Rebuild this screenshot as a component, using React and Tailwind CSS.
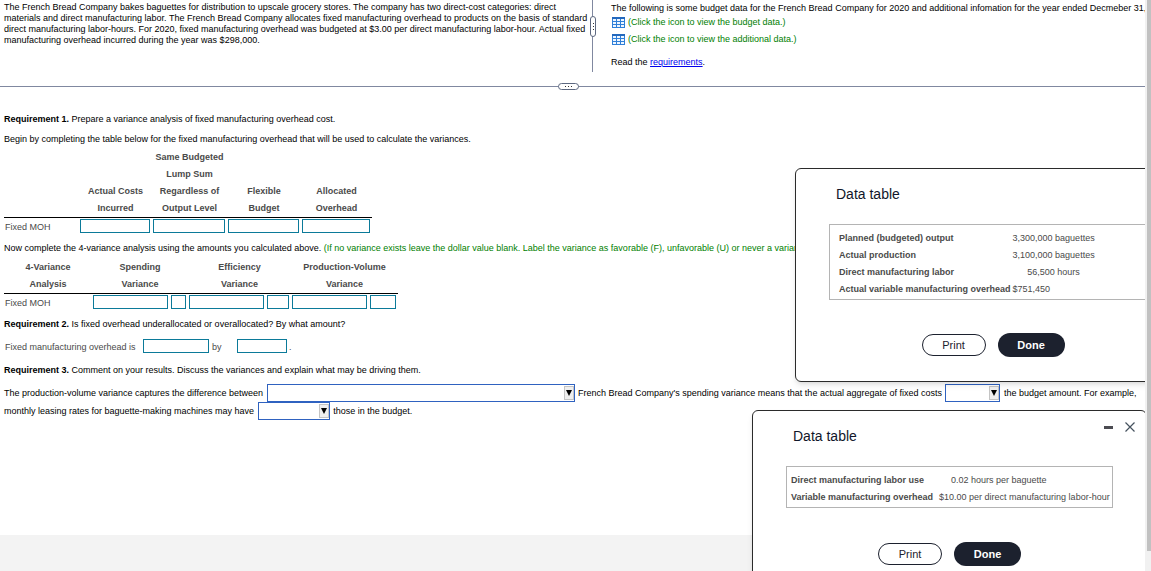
import { useState } from "react";

const budgetHeads = [
  ["Actual Costs", "Incurred"],
  ["Same Budgeted", "Lump Sum", "Regardless of", "Output Level"],
  ["Flexible", "Budget"],
  ["Allocated", "Overhead"],
];

const varianceHeads = ["Spending", "Efficiency", "Production-Volume"];

const GridIcon = () => (
  <svg width="13" height="11" viewBox="0 0 13 11" shapeRendering="crispEdges" aria-hidden="true">
    <rect width="13" height="11" rx="1" fill="#2f7fd8" />
    <rect width="13" height="2" fill="#2368bd" />
    <g fill="#eef6ff">
      {[2, 5, 8].map((y) =>
        [1, 5, 9].map((x) => <rect key={`${x}-${y}`} x={x} y={y} width="3" height="2" />)
      )}
    </g>
  </svg>
);

const AnswerBox = ({ label, className = "w-full" }) => (
  <input
    type="text"
    aria-label={label}
    className={`block h-[14px] border border-[#0b7a99] bg-white px-1 focus:outline-none ${className}`}
  />
);

const AnswerSelect = ({ label, options, className }) => {
  const [value, setValue] = useState("");

  return (
    <span className={`relative mx-px inline-block h-[18px] align-top ${className}`}>
      <select
        aria-label={label}
        value={value}
        onChange={(event) => setValue(event.target.value)}
        className="block h-full w-full appearance-none border border-[#2f62c0] bg-white pl-1 pr-3 focus:outline-none"
      >
        <option value=""></option>
        {options.map((option) => (
          <option key={option} value={option}>
            {option}
          </option>
        ))}
      </select>
      <span className="pointer-events-none absolute top-[2px] right-[1px] flex h-[14px] w-[10px] justify-center border border-[#c4c4c4] bg-[#efefef] pt-[3px]">
        <svg width="6" height="6" viewBox="0 0 6 6" aria-hidden="true">
          <path d="M0 0h6L3 6z" fill="#000" />
        </svg>
      </span>
    </span>
  );
};

const DataDialog = ({ className, controls, children }) => (
  <section
    role="dialog"
    aria-label="Data table"
    className={`absolute rounded-md border border-[#2b2b2b] bg-white pb-6 shadow-md ${className}`}
  >
    {controls && (
      <div className="absolute top-[10px] right-[11px] flex items-center gap-3 text-[#46525e]">
        <button type="button" aria-label="Minimize" className="flex h-3 items-center">
          <span className="h-[3px] w-[9px] bg-[#4c4c52]" />
        </button>
        <button type="button" aria-label="Close">
          <svg width="10" height="10" viewBox="0 0 10 10" fill="none" stroke="currentColor" strokeWidth="1.2">
            <path d="M0.5 0.5l9 9M9.5 0.5l-9 9" />
          </svg>
        </button>
      </div>
    )}
    <h2 className="pt-[17px] pl-10 text-[14px] leading-4 text-[#11162a]">Data table</h2>
    {children}
    <div className="flex items-center justify-center gap-3 text-[11px]">
      <button type="button" className="h-[22px] w-16 rounded-full border border-[#1c212e] text-[#1c212e]">
        Print
      </button>
      <button type="button" className="h-6 w-[67px] rounded-full bg-[#1c212e] font-bold text-white">
        Done
      </button>
    </div>
  </section>
);

const App = () => {
  return (
    <div className="flex h-screen overflow-hidden bg-white font-['Liberation_Sans',Arial,sans-serif] text-[9px] leading-4 text-black">
      <main className="relative flex min-w-0 flex-1 flex-col overflow-hidden">
        <header className="flex h-[86px] shrink-0">
          <p className="w-[592px] shrink-0 pt-[2px] pr-1 pl-1 leading-[11px]">
            The French Bread Company bakes baguettes for distribution to upscale grocery stores. The company has two
            direct-cost categories: direct materials and direct manufacturing labor. The French Bread Company allocates
            fixed manufacturing overhead to products on the basis of standard direct manufacturing labor-hours. For
            2020, fixed manufacturing overhead was budgeted at $3.00 per direct manufacturing labor-hour. Actual fixed
            manufacturing overhead incurred during the year was $298,000.
          </p>
          <div className="relative h-[72px] w-px shrink-0 bg-[#8088a0]">
            <span className="absolute top-4 -left-[2px] flex h-[21px] w-[6px] flex-col items-center justify-center gap-[2px] rounded-full border border-[#5d6880] bg-white">
              <i className="size-px bg-[#333]" />
              <i className="size-px bg-[#333]" />
              <i className="size-px bg-[#333]" />
            </span>
          </div>
          <div className="flex min-w-0 flex-1 flex-col pl-[18px] whitespace-nowrap">
            <p>
              The following is some budget data for the French Bread Company for 2020 and additional infomation for the
              year ended Decmeber 31, 2020.
            </p>
            <button type="button" className="mt-[-2px] flex items-center gap-[3px] pl-px text-[#008000]">
              <GridIcon />
              (Click the icon to view the budget data.)
            </button>
            <button type="button" className="mt-px flex items-center gap-[3px] pl-px text-[#008000]">
              <GridIcon />
              (Click the icon to view the additional data.)
            </button>
            <p className="mt-[7px]">
              Read the{" "}
              <a href="#requirements" className="text-[#0000ee] underline">
                requirements
              </a>
              .
            </p>
          </div>
        </header>

        <div className="relative h-px shrink-0 bg-[#8088a0]">
          <span className="absolute -top-[3px] left-[558px] flex h-[7px] w-[21px] items-center justify-center gap-[2px] rounded-full border border-[#5d6880] bg-white">
            <i className="size-px bg-[#333]" />
            <i className="size-px bg-[#333]" />
            <i className="size-px bg-[#333]" />
          </span>
        </div>

        <div className="flex-1 pt-6 pl-1">
          <p>
            <b>Requirement 1.</b> Prepare a variance analysis of fixed manufacturing overhead cost.
          </p>
          <p className="mt-1">
            Begin by completing the table below for the fixed manufacturing overhead that will be used to calculate the
            variances.
          </p>

          <table className="mt-[2px] w-[368px] table-fixed text-[#4a4a4a]">
            <colgroup>
              <col className="w-[75px]" />
              <col className="w-[73px]" />
              <col className="w-[75px]" />
              <col className="w-[74px]" />
              <col className="w-[71px]" />
            </colgroup>
            <thead className="border-b border-black leading-[17px]">
              <tr>
                <td />
                {budgetHeads.map((lines) => (
                  <th key={lines[0]} className="align-bottom whitespace-nowrap">
                    {lines.map((line) => (
                      <div key={line}>{line}</div>
                    ))}
                  </th>
                ))}
              </tr>
            </thead>
            <tbody>
              <tr>
                <th className="pl-px text-left font-normal">Fixed MOH</th>
                {budgetHeads.map((lines) => (
                  <td key={lines[0]} className="pt-px pr-[2px] pb-[2px] pl-px">
                    <AnswerBox label={lines.join(" ")} />
                  </td>
                ))}
              </tr>
            </tbody>
          </table>

          <p className="mt-[5px] whitespace-nowrap">
            Now complete the 4-variance analysis using the amounts you calculated above.{" "}
            <span className="text-[#008000]">
              (If no variance exists leave the dollar value blank. Label the variance as favorable (F), unfavorable (U)
              or never a variance (N).)
            </span>
          </p>

          <table className="mt-[3px] w-[394px] table-fixed text-[#4a4a4a]">
            <colgroup>
              <col className="w-[88px]" />
              <col className="w-[78px]" />
              <col className="w-[18px]" />
              <col className="w-[78px]" />
              <col className="w-[25px]" />
              <col className="w-[78px]" />
              <col className="w-[29px]" />
            </colgroup>
            <thead className="border-b border-black leading-[17px]">
              <tr>
                <th>
                  4-Variance
                  <br />
                  Analysis
                </th>
                {varianceHeads.map((head) => (
                  <th key={head} colSpan={2}>
                    {head}
                    <br />
                    Variance
                  </th>
                ))}
              </tr>
            </thead>
            <tbody>
              <tr>
                <th className="pl-px text-left font-normal">Fixed MOH</th>
                {varianceHeads.flatMap((head) => [
                  <td key={head} className="pt-px pr-[2px] pb-[2px] pl-px">
                    <AnswerBox label={`${head} variance amount`} />
                  </td>,
                  <td key={`${head}-label`} className="pt-px pr-[2px] pb-[2px] pl-px">
                    <AnswerBox label={`${head} variance label`} />
                  </td>,
                ])}
              </tr>
            </tbody>
          </table>

          <p className="mt-[5px]">
            <b>Requirement 2.</b> Is fixed overhead underallocated or overallocated? By what amount?
          </p>
          <div className="mt-[7px] flex h-4 pl-px text-[#4a4a4a]">
            <span className="w-[138px] whitespace-nowrap">Fixed manufacturing overhead is</span>
            <AnswerBox label="Underallocated or overallocated" className="w-[66px]" />
            <span className="w-7 pl-[3px]">by</span>
            <AnswerBox label="Amount" className="w-[50px]" />
            <span className="pl-[2px]">.</span>
          </div>
          <p className="mt-[7px]">
            <b>Requirement 3.</b> Comment on your results. Discuss the variances and explain what may be driving them.
          </p>
          <p className="mt-[6px] leading-[18px]">
            The production-volume variance captures the difference between{" "}
            <AnswerSelect
              label="Difference between"
              className="w-[308px]"
              options={["budgeted and allocated fixed overhead", "actual and budgeted fixed overhead"]}
            />{" "}
            French Bread Company's spending variance means that the actual aggregate of fixed costs{" "}
            <AnswerSelect
              label="Compared with budget"
              className="w-[55px]"
              options={["equals", "exceeds", "is less than"]}
            />{" "}
            the budget amount. For example, monthly leasing rates for baguette-making machines may have{" "}
            <AnswerSelect
              label="Compared with those in the budget"
              className="w-[72px]"
              options={["equaled", "exceeded", "fallen below"]}
            />{" "}
            those in the budget.
          </p>
        </div>

        <footer className="h-9 shrink-0 bg-[#f3f3f3]" />

        <DataDialog className="top-[168px] -right-[46px] w-[396px]">
          <div className="mt-[22px] mb-[33px] ml-[33px] border border-[#b4b4b4] pt-[5px] pb-px pl-[9px] text-[#4a4a4a]">
            <table className="leading-[17px] whitespace-nowrap">
              <tbody>
                <tr>
                  <th className="pr-[2px] text-left">Planned (budgeted) output</th>
                  <td className="text-center">3,300,000 baguettes</td>
                </tr>
                <tr>
                  <th className="pr-[2px] text-left">Actual production</th>
                  <td className="text-center">3,100,000 baguettes</td>
                </tr>
                <tr>
                  <th className="pr-[2px] text-left">Direct manufacturing labor</th>
                  <td className="text-center">56,500 hours</td>
                </tr>
                <tr>
                  <th className="pr-[2px] text-left">Actual variable manufacturing overhead</th>
                  <td>$751,450</td>
                </tr>
              </tbody>
            </table>
          </div>
        </DataDialog>

        <DataDialog className="top-[410px] -right-[2px] w-[395px]" controls>
          <div className="mt-[22px] mr-[33px] mb-[34px] ml-[33px] border border-[#b4b4b4] pt-[5px] pb-px pl-1 text-[#4a4a4a]">
            <table className="leading-[17px] whitespace-nowrap">
              <tbody>
                <tr>
                  <th className="pr-[6px] text-left">Direct manufacturing labor use</th>
                  <td className="pl-3">0.02 hours per baguette</td>
                </tr>
                <tr>
                  <th className="pr-[6px] text-left">Variable manufacturing overhead</th>
                  <td>$10.00 per direct manufacturing labor-hour</td>
                </tr>
              </tbody>
            </table>
          </div>
        </DataDialog>
      </main>

      <div className="flex w-[6px] shrink-0 justify-end bg-[#f1f1f1] pb-5">
        <div className="w-1 bg-[#c1c1c1]" />
      </div>
    </div>
  );
};

export default App;
